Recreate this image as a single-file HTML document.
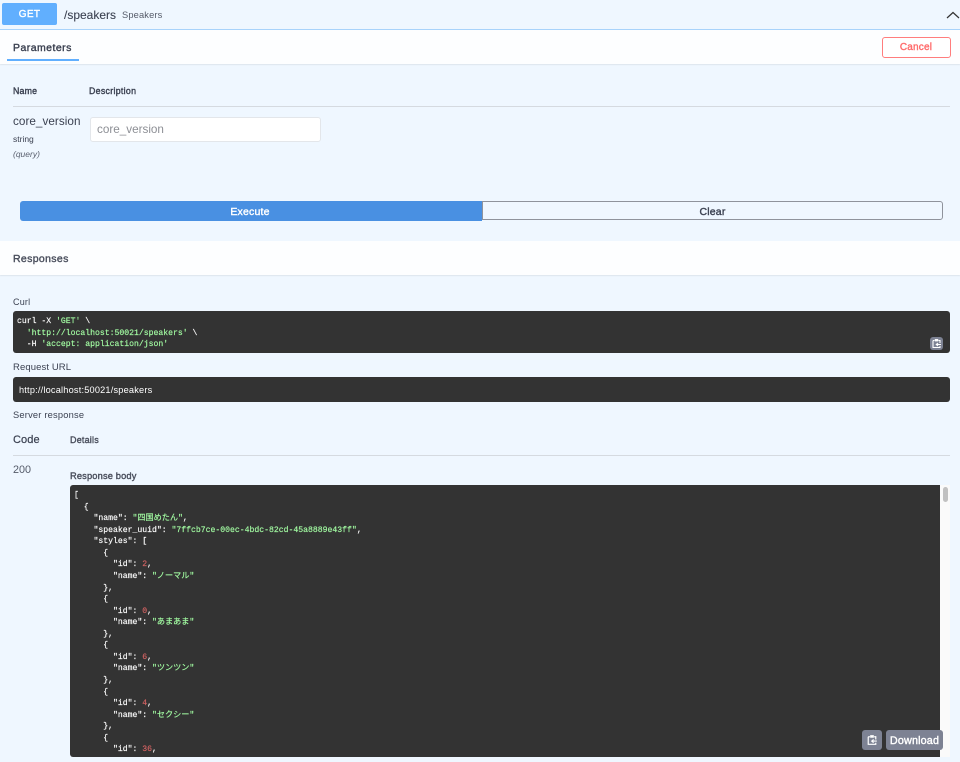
<!DOCTYPE html>
<html lang="en">
<head>
<meta charset="utf-8">
<style>
html,body{margin:0;padding:0;width:960px;height:762px;overflow:hidden;background:#eff7ff;font-family:"Liberation Sans","Noto Sans CJK JP",sans-serif;color:#3b4151}
#w{position:absolute;left:0;top:0;width:960px;height:762px;filter:blur(.3px)}
.a{position:absolute;white-space:pre}
.t{line-height:12px}
.b{font-weight:normal;-webkit-text-stroke:.38px currentColor}
.box{position:absolute;background:#333;border-radius:3px}
.code{position:absolute;font-family:"Liberation Mono","Noto Sans CJK JP",monospace;font-size:8.15px;line-height:11.56px;color:#fff;white-space:pre;margin:0;-webkit-text-stroke:.15px currentColor}
.g{color:#a2fca2}.r{color:#d36363}
.ic{position:absolute;background:#7d8293;border-radius:3px}
</style>
</head>
<body>
<div id="w">
<div class="a" style="left:0;top:0;width:960px;height:29px;background:#eff7ff;border-bottom:1px solid #a8d3fb"></div>
<div class="a" style="left:2px;top:3px;width:55px;height:22px;background:#61affe;border-radius:2px"></div>
<div class="a t b" style="left:2px;top:9px;width:55px;text-align:center;font-size:10px;letter-spacing:.3px;color:#fff">GET</div>
<div class="a t" style="left:64px;top:8.500px;font-size:12px;color:#3b4151;-webkit-text-stroke:.1px currentColor">/speakers</div>
<div class="a t" style="left:122px;top:8.500px;font-size:9.300px;letter-spacing:.15px;color:#555b69">Speakers</div>
<svg class="a" style="left:946px;top:10px" width="14" height="10" viewBox="0 0 14 10"><path d="M1 8 L7 2.500 L13 8" fill="none" stroke="#333" stroke-width="1.200"/></svg>

<div class="a" style="left:0;top:30px;width:960px;height:34px;background:#fdfeff;box-shadow:0 1px 1px rgba(0,0,0,.08)"></div>
<div class="a t b" style="left:13px;top:41.500px;font-size:10.500px;letter-spacing:.45px;color:#3b4151">Parameters</div>
<div class="a" style="left:7px;top:59px;width:72px;height:2px;background:#61affe"></div>
<div class="a" style="left:881.500px;top:36.500px;width:67px;height:19px;border:1.300px solid #ff7d7d;border-radius:3px;background:#fff"></div>
<div class="a t b" style="left:882px;top:41.500px;width:68px;text-align:center;font-size:10px;letter-spacing:.2px;color:#ff6b6b">Cancel</div>

<div class="a t b" style="left:13px;top:85px;font-size:8.800px;letter-spacing:.2px">Name</div>
<div class="a t b" style="left:89px;top:85px;font-size:8.800px;letter-spacing:.3px">Description</div>
<div class="a" style="left:13px;top:106px;width:937px;height:1px;background:#d5dae0"></div>
<div class="a t" style="left:13px;top:115.500px;font-size:11.700px;letter-spacing:.05px">core_version</div>
<div class="a t" style="left:13px;top:133px;font-size:8.500px">string</div>
<div class="a t" style="left:13px;top:148px;font-size:8.500px;font-style:italic;color:#5b6170">(query)</div>
<div class="a" style="left:89.500px;top:117px;width:229px;height:22.500px;background:#fff;border:1px solid #e3e6ea;border-radius:3px"></div>
<div class="a t" style="left:97px;top:123.500px;font-size:11.700px;color:#8d8f95">core_version</div>

<div class="a" style="left:19.500px;top:201px;width:462px;height:20px;background:#4990e2;border-radius:3px 0 0 3px"></div>
<div class="a t b" style="left:19px;top:205.500px;width:462px;text-align:center;font-size:10.500px;letter-spacing:.2px;color:#fff">Execute</div>
<div class="a" style="left:481.500px;top:200.800px;width:459.500px;height:17.700px;border:1.300px solid #8f939c;border-radius:0 3px 3px 0"></div>
<div class="a t b" style="left:482px;top:205.500px;width:461px;text-align:center;font-size:10.500px;letter-spacing:.2px;color:#3b4151">Clear</div>

<div class="a" style="left:0;top:241px;width:960px;height:34px;background:#fdfeff;box-shadow:0 1px 1px rgba(0,0,0,.08)"></div>
<div class="a t b" style="left:13px;top:252.500px;font-size:10.500px;letter-spacing:.35px;color:#4a4f5d">Responses</div>

<div class="a t" style="left:13px;top:295.500px;font-size:9px;letter-spacing:.2px">Curl</div>
<div class="box" style="left:13px;top:311px;width:937px;height:42px"></div>
<pre class="code" style="left:17px;top:316px;line-height:11.600px">curl -X <span class="g">'GET'</span> \
  <span class="g">'http://localhost:50021/speakers'</span> \
  -H <span class="g">'accept: application/json'</span></pre>
<div class="ic" style="left:930px;top:337px;width:13px;height:13px"></div>
<svg class="a" style="left:930px;top:337px" width="13" height="13" viewBox="0 0 13 13"><path d="M3 3.500h1.500M8.500 3.500H10v2.500M10 9v1.500H3v-7" fill="none" stroke="#fff" stroke-width="1.100"/><rect x="4.800" y="2" width="3.400" height="2.400" fill="#fff"/><path d="M6 7.500h5M8 6l-1.800 1.500L8 9" fill="none" stroke="#fff" stroke-width="1"/></svg>

<div class="a t" style="left:13px;top:361.500px;font-size:9.500px;letter-spacing:.1px">Request URL</div>
<div class="box" style="left:13px;top:377px;width:937px;height:25px"></div>
<div class="a t" style="left:19px;top:383.500px;font-size:9.200px;letter-spacing:.2px;color:#fff">http://localhost:50021/speakers</div>
<div class="a t" style="left:13px;top:409px;font-size:9.300px;letter-spacing:.2px">Server response</div>

<div class="a t" style="left:13px;top:434px;font-size:11px;letter-spacing:.1px;color:#3b4151;-webkit-text-stroke:.2px currentColor">Code</div>
<div class="a t b" style="left:70px;top:434px;font-size:9px;letter-spacing:.2px;color:#4a4f5d">Details</div>
<div class="a" style="left:13px;top:455px;width:937px;height:1px;background:#d5dae0"></div>
<div class="a t" style="left:13px;top:464px;font-size:10.800px;color:#555b69">200</div>
<div class="a t b" style="left:70px;top:469.500px;font-size:9.300px;letter-spacing:.15px;color:#4a4f5d">Response body</div>

<div class="box" style="left:70px;top:485px;width:870px;height:272px;border-radius:3px 0 0 3px"></div>
<div class="a" style="left:940px;top:485px;width:10px;height:272px;background:#fafafa"></div>
<div class="a" style="left:943px;top:487px;width:5px;height:15px;background:#c1c1c1;border-radius:3px"></div>
<pre class="code" style="left:74px;top:490px">[
  {
    "name": <span class="g">"四国めたん"</span>,
    "speaker_uuid": <span class="g">"7ffcb7ce-00ec-4bdc-82cd-45a8889e43ff"</span>,
    "styles": [
      {
        "id": <span class="r">2</span>,
        "name": <span class="g">"ノーマル"</span>
      },
      {
        "id": <span class="r">0</span>,
        "name": <span class="g">"あまあま"</span>
      },
      {
        "id": <span class="r">6</span>,
        "name": <span class="g">"ツンツン"</span>
      },
      {
        "id": <span class="r">4</span>,
        "name": <span class="g">"セクシー"</span>
      },
      {
        "id": <span class="r">36</span>,</pre>

<div class="ic" style="left:862px;top:730px;width:20px;height:20px"></div>
<svg class="a" style="left:865px;top:733px" width="14" height="14" viewBox="0 0 13 13"><path d="M3 3.500h1.500M8.500 3.500H10v2.500M10 9v1.500H3v-7" fill="none" stroke="#fff" stroke-width="1.100"/><rect x="4.800" y="2" width="3.400" height="2.400" fill="#fff"/><path d="M6 7.500h5M8 6l-1.800 1.500L8 9" fill="none" stroke="#fff" stroke-width="1"/></svg>
<div class="ic" style="left:886px;top:730px;width:57px;height:20px"></div>
<div class="a t b" style="left:886px;top:734.500px;width:57px;text-align:center;font-size:10.800px;letter-spacing:.15px;color:#fff">Download</div>
</div>
</body>
</html>
